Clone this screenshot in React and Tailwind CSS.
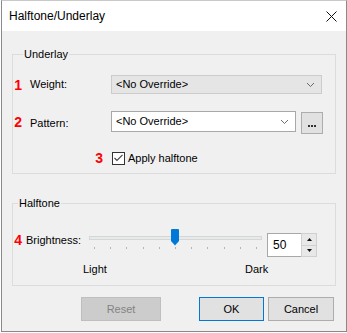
import React from "react";

const Num = ({ n, w }) => (
  <span className={`${w} shrink-0 text-right text-[14px] font-bold leading-[14px] text-[#ff0000]`}>{n}</span>
);

const Chevron = () => (
  <svg width="9" height="6" viewBox="0 0 9 6" className="shrink-0">
    <polyline points="1,1 4.5,4.5 8,1" fill="none" stroke="#6b6b6b" strokeWidth="1" />
  </svg>
);

const Combo = ({ w, disabled }) => (
  <div
    className={`${w} flex items-center justify-between pl-[4px] pr-[6px] border ${
      disabled ? "h-[19px] bg-[#e5e5e5] border-[#cccccc]" : "h-[21px] bg-white border-[#a8a8a8]"
    }`}
  >
    <span>&lt;No Override&gt;</span>
    <Chevron />
  </div>
);

const Group = ({ label, labelX, className, children }) => (
  <div className={`relative ml-[10px] w-[324px] border border-[#dcdcdc] ${className}`}>
    <span className={`absolute top-[-8px] ${labelX} bg-[#f0f0f0] px-[1px] leading-[14px]`}>{label}</span>
    {children}
  </div>
);

const Btn = ({ w, children, cls }) => (
  <div className={`${w} h-[24px] flex items-center justify-center border ${cls}`}>{children}</div>
);

export default function App() {
  return (
    <div className="w-[347px] h-[333px] bg-white" style={{ fontFamily: '"Liberation Sans", Arial, sans-serif' }}>
      <div className="ml-[1px] w-[346px] h-[332px] border border-[#8a8a8a] border-t-[#c9c9c9] flex flex-col text-[11px] text-black">
        {/* title bar */}
        <div className="h-[30px] bg-white flex items-center justify-between pl-[7px] pr-[9px]">
          <span className="text-[12px]">Halftone/Underlay</span>
          <svg width="11" height="11" viewBox="0 0 11 11">
            <path d="M0.5 0.5 L10.5 10.5 M10.5 0.5 L0.5 10.5" stroke="#111" strokeWidth="1" />
          </svg>
        </div>
        <div className="flex-1 bg-[#f0f0f0] flex flex-col">
          <Group label="Underlay" labelX="left-[10px]" className="mt-[23px] h-[120px]">
            <div className="flex items-center mt-[20px] h-[19px]">
              <Num n="1" w="w-[9px]" />
              <span className="w-[89px] pl-[8px]">Weight:</span>
              <Combo w="w-[211px]" disabled />
            </div>
            <div className="flex items-start mt-[17px] h-[23px]">
              <Num n="2" w="w-[9px] mt-[4px]" />
              <span className="w-[89px] pl-[8px] mt-[4px]">Pattern:</span>
              <Combo w="w-[185px]" />
              <div className="ml-[5px] mt-[1px] w-[22px] h-[22px] bg-[#e1e1e1] border border-[#adadad] flex items-end justify-center pb-[6px] gap-[1px]">
                <span className="w-[2px] h-[2px] bg-[#333]" />
                <span className="w-[2px] h-[2px] bg-[#333]" />
                <span className="w-[2px] h-[2px] bg-[#333]" />
              </div>
            </div>
            <div className="flex items-center mt-[16px] h-[16px]">
              <Num n="3" w="w-[90px]" />
              <span className="ml-[9px] w-[13px] h-[13px] bg-white border border-[#333] flex items-center justify-center">
                <svg width="9" height="8" viewBox="0 0 9 8">
                  <polyline points="0.5,4 3,6.5 8.5,0.8" fill="none" stroke="#444" strokeWidth="1.2" />
                </svg>
              </span>
              <span className="ml-[3px]">Apply halftone</span>
            </div>
          </Group>

          <Group label="Halftone" labelX="left-[5px]" className="mt-[29px] h-[83px]">
            <div className="flex items-start mt-[25px] h-[28px]">
              <Num n="4" w="w-[9px] mt-[4px]" />
              <span className="w-[67px] pl-[4px] mt-[4px] leading-[14px]">Brightness:</span>
              <div className="relative w-[173px] h-[28px]">
                <div className="mt-[7px] h-[4px] bg-[#e7eaea] border border-[#d6d6d6]" />
                <div className="mt-[7px] ml-[5px] w-[163px] flex justify-between">
                  {Array.from({ length: 11 }).map((_, i) => (
                    <span key={i} className="w-[1px] h-[2px] bg-[#b4b4b4]" />
                  ))}
                </div>
                <svg className="absolute left-[82px] top-0" width="8" height="17" viewBox="0 0 8 17">
                  <path d="M1 0 H7 Q8 0 8 1 V12 L4 16.5 L0 12 V1 Q0 0 1 0 Z" fill="#0078d7" />
                </svg>
              </div>
              <div className="ml-[5px] mt-[4px] flex">
                <div className="w-[34px] h-[24px] bg-white border border-[#a8a8a8] border-r-0 flex items-center pl-[5px] text-[12px]">
                  50
                </div>
                <div className="w-[16px] h-[24px] flex flex-col border border-[#d0d0d0] bg-[#e8e8e8]">
                  <div className="flex-1 flex items-center justify-center border-b border-[#d0d0d0]">
                    <svg width="5" height="3" viewBox="0 0 5 3"><path d="M0 3 L2.5 0 L5 3 Z" fill="#111" /></svg>
                  </div>
                  <div className="flex-1 flex items-center justify-center">
                    <svg width="5" height="3" viewBox="0 0 5 3"><path d="M0 0 L2.5 3 L5 0 Z" fill="#111" /></svg>
                  </div>
                </div>
              </div>
            </div>
            <div className="flex mt-[5px] leading-[14px]">
              <span className="ml-[70px] w-[162px]">Light</span>
              <span>Dark</span>
            </div>
          </Group>

          <div className="flex mt-[11px]">
            <Btn w="ml-[79px] w-[80px]" cls="bg-[#cccccc] border-[#bfbfbf] text-[#838383]">Reset</Btn>
            <Btn w="ml-[38px] w-[65px]" cls="bg-[#e1e1e1] border-[#0078d7]">OK</Btn>
            <Btn w="ml-[4px] w-[66px]" cls="bg-[#e1e1e1] border-[#adadad]">Cancel</Btn>
          </div>
        </div>
      </div>
    </div>
  );
}
